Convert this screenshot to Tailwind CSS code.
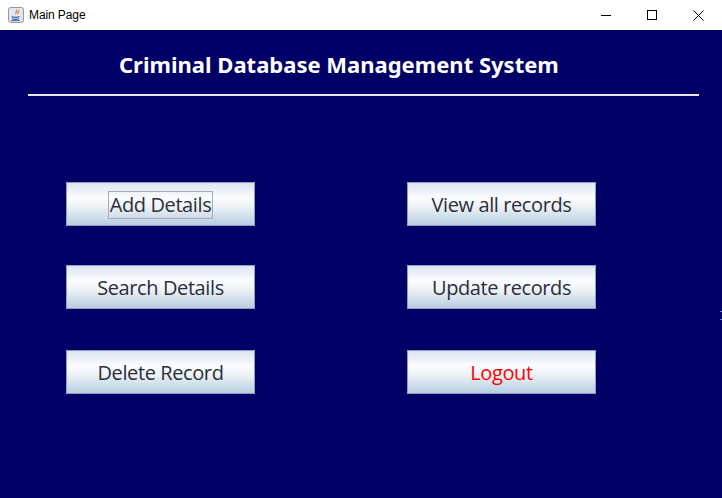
<!DOCTYPE html>
<html>
<head>
    <meta charset="UTF-8">
    <script src="https://cdn.jsdelivr.net/npm/@tailwindcss/browser@4"></script>
</head>
<body class="relative w-[722px] h-[498px] overflow-hidden flex flex-col bg-[#000066] font-['Open_Sans',sans-serif]">
    <!-- Title bar -->
    <div class="flex items-center justify-between h-[30px] bg-white">
        <div class="flex items-center pl-[8px] gap-[5px]">
            <svg class="w-[16px] h-[16px]" viewBox="0 0 16 16" fill="none">
                <rect x="0.5" y="0.5" width="15" height="15" rx="2" fill="#dfe6f0" stroke="#8a9ab0"/>
                <path d="M8.5 2.5c1.5 1.5-1.5 2.5-.5 4.5M10.5 3.500c1 1-1 2-.5 3.500" stroke="#d9822b" stroke-width="1.200"/>
                <path d="M3.500 9.500c2 1.200 6 1.200 8 0M4 11.500c2 1 5 1 7 0M3 13.500h9" stroke="#4a6fa5" stroke-width="1.100"/>
            </svg>
            <span class="text-[12px] tracking-[-0.1px] text-black font-['Liberation_Sans',sans-serif]">Main Page</span>
        </div>
        <div class="flex items-center pr-[1px]">
            <div class="w-[46px] h-[30px] flex items-center justify-center">
                <svg class="w-[10px] h-[10px]" viewBox="0 0 10 10"><path d="M0 5.500h10" stroke="#000" stroke-width="1"/></svg>
            </div>
            <div class="w-[46px] h-[30px] flex items-center justify-center">
                <svg class="w-[10px] h-[10px]" viewBox="0 0 10 10"><rect x="0.500" y="0.500" width="9" height="9" fill="none" stroke="#000"/></svg>
            </div>
            <div class="w-[46px] h-[30px] flex items-center justify-center">
                <svg class="w-[11px] h-[11px]" viewBox="0 0 11 11"><path d="M0.500 0.500l10 10M10.500 0.500l-10 10" stroke="#000" stroke-width="1"/></svg>
            </div>
        </div>
    </div>

    <!-- Heading -->
    <div class="flex flex-col pl-[28px] pr-[23px]">
        <h1 class="h-[64px] pt-[4px] pl-[91px] flex items-center text-[22px] leading-none font-bold text-white whitespace-nowrap font-['Noto_Sans',sans-serif]">Criminal Database Management System</h1>
        <div class="h-[1.500px] bg-[#e8e8f4]"></div>
    </div>

    <!-- Buttons -->
    <div class="grid grid-cols-[189px_189px] grid-rows-[44px_44px_44px] gap-x-[152px] pl-[66px] pt-[86px] text-[20px] tracking-[-0.4px] text-[#2b2f38]">
        <button class="h-[44px] pt-[2px] flex items-center justify-center border border-[#8f9fbc] bg-[linear-gradient(#dbe5f1_0%,#fbfcfe_35%,#eef3f8_55%,#b9cde0_100%)]">
            <span class="h-[28px] px-[1px] flex items-center border border-[#a3adb9]">Add Details</span>
        </button>
        <button class="h-[44px] pt-[2px] flex items-center justify-center border border-[#8f9fbc] bg-[linear-gradient(#dbe5f1_0%,#fbfcfe_35%,#eef3f8_55%,#b9cde0_100%)]">View all records</button>
        <button class="h-[44px] pt-[2px] mt-[39px] flex items-center justify-center border border-[#8f9fbc] bg-[linear-gradient(#dbe5f1_0%,#fbfcfe_35%,#eef3f8_55%,#b9cde0_100%)]">Search Details</button>
        <button class="h-[44px] pt-[2px] mt-[39px] flex items-center justify-center border border-[#8f9fbc] bg-[linear-gradient(#dbe5f1_0%,#fbfcfe_35%,#eef3f8_55%,#b9cde0_100%)]">Update records</button>
        <button class="h-[44px] pt-[2px] mt-[80px] flex items-center justify-center border border-[#8f9fbc] bg-[linear-gradient(#dbe5f1_0%,#fbfcfe_35%,#eef3f8_55%,#b9cde0_100%)]">Delete Record</button>
        <button class="h-[44px] pt-[2px] mt-[80px] flex items-center justify-center border border-[#8f9fbc] bg-[linear-gradient(#dbe5f1_0%,#fbfcfe_35%,#eef3f8_55%,#b9cde0_100%)] text-[#ff0000]">Logout</button>
    </div>

    <!-- stray marks on the right edge -->
    <div class="absolute right-0 top-[311px] w-[2px] h-[1px] bg-[#5f8fd0]"></div>
    <div class="absolute right-0 top-[319px] w-[2px] h-[1px] bg-[#5f8fd0]"></div>
</body>
</html>
